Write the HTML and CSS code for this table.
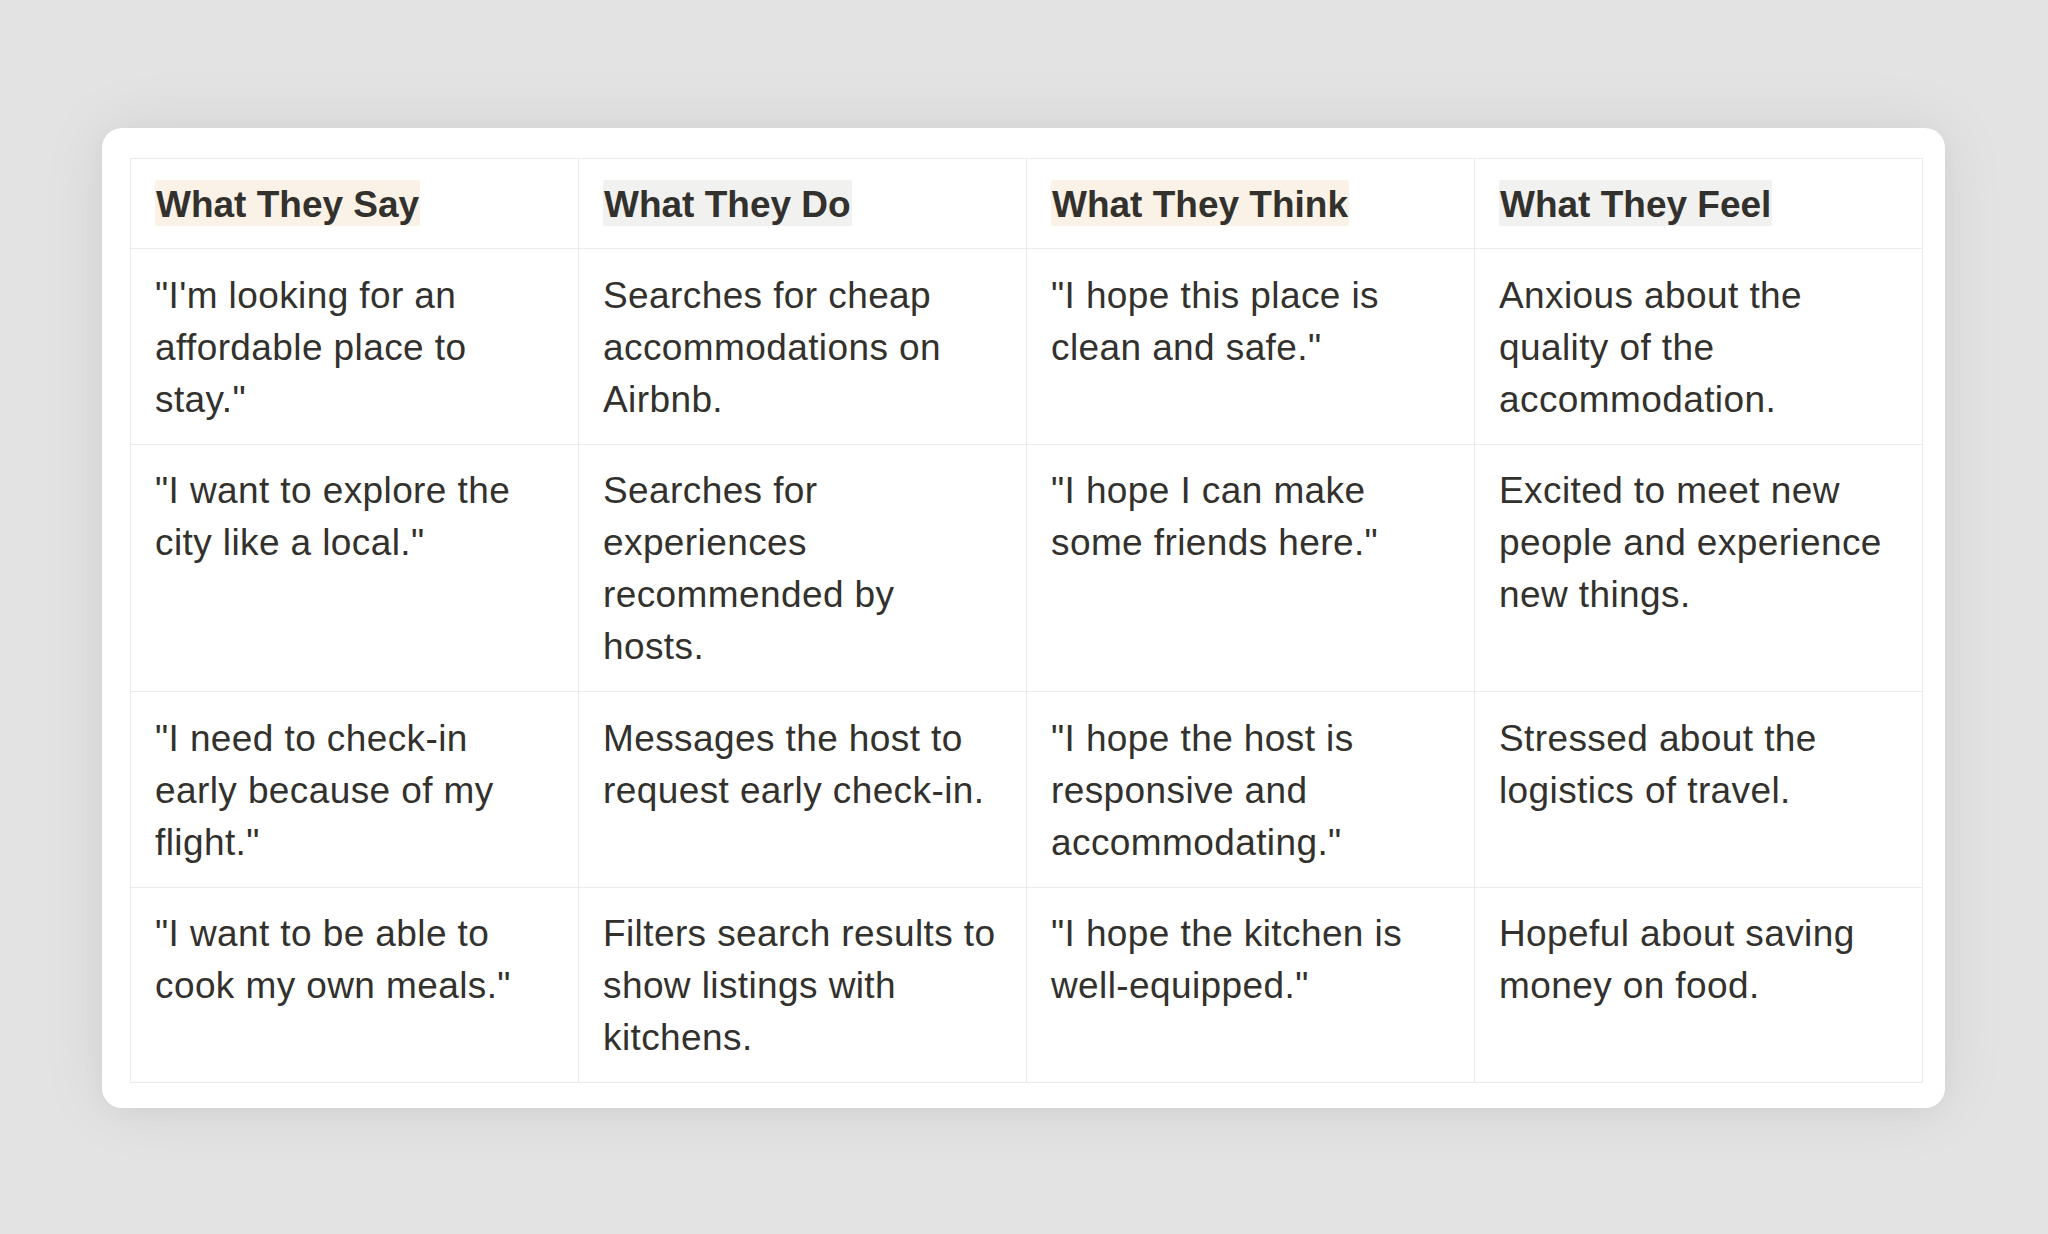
FILE: index.html
```html
<!DOCTYPE html>
<html>
<head>
<meta charset="utf-8">
<link rel="stylesheet" href="styles.css">
</head>
<body>
<div class="card">
  <table class="grid">
    <thead>
      <tr>
        <th><span class="tag tag-orange">What They Say</span></th>
        <th><span class="tag tag-gray">What They Do</span></th>
        <th><span class="tag tag-orange">What They Think</span></th>
        <th><span class="tag tag-gray">What They Feel</span></th>
      </tr>
    </thead>
    <tbody>
      <tr>
        <td>"I'm looking for an affordable place to stay."</td>
        <td>Searches for cheap accommodations on Airbnb.</td>
        <td>"I hope this place is clean and safe."</td>
        <td>Anxious about the quality of the accommodation.</td>
      </tr>
      <tr>
        <td>"I want to explore the city like a local."</td>
        <td>Searches for experiences recommended by hosts.</td>
        <td>"I hope I can make some friends here."</td>
        <td>Excited to meet new people and experience new things.</td>
      </tr>
      <tr>
        <td>"I need to check-in early because of my flight."</td>
        <td>Messages the host to request early check-in.</td>
        <td>"I hope the host is responsive and accommodating."</td>
        <td>Stressed about the logistics of travel.</td>
      </tr>
      <tr>
        <td>"I want to be able to cook my own meals."</td>
        <td>Filters search results to show listings with kitchens.</td>
        <td>"I hope the kitchen is well-equipped."</td>
        <td>Hopeful about saving money on food.</td>
      </tr>
    </tbody>
  </table>
</div>
</body>
</html>
```
FILE: styles.css
```css
html, body {
  margin: 0;
  padding: 0;
}
body {
  background: #e3e3e3;
  font-family: "Liberation Sans", Arial, sans-serif;
  color: #33312d;
  padding: 128px 0 0 102px;
  min-height: 1234px;
  box-sizing: border-box;
}
.card {
  width: 1843px;
  box-sizing: border-box;
  background: #ffffff;
  border-radius: 20px;
  padding: 30px 22px 25px 28px;
  box-shadow: 0 0 70px rgba(0, 0, 0, 0.07), 0 4px 24px rgba(0, 0, 0, 0.04);
}
.grid {
  width: 1793px;
  border-collapse: collapse;
  table-layout: fixed;
}
.grid th,
.grid td {
  border: 1px solid #ebebea;
  width: 25%;
  text-align: left;
  vertical-align: top;
  font-size: 37px;
  padding: 21px 26px 19px 24px;
}
.grid th {
  font-weight: bold;
  line-height: 49px;
}
.grid td {
  font-weight: normal;
  line-height: 52px;
  letter-spacing: 0.4px;
  padding-top: 20.5px;
  padding-bottom: 18px;
}
.tag {
  padding: 4px 1px 1px 1px;
  border-radius: 2px;
}
.tag-orange {
  background: #faf2e6;
}
.tag-gray {
  background: #f1f1ef;
}
```
